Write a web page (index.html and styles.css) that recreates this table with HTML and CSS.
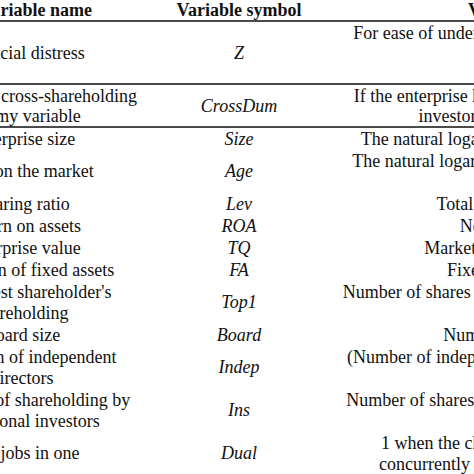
FILE: index.html
```html
<!DOCTYPE html>
<html lang="en">
<head>
<meta charset="utf-8">
<title>Variable definitions</title>
<link rel="stylesheet" href="styles.css">
</head>
<body>
<div class="page">
<table class="vars">
  <colgroup>
    <col class="c-name">
    <col class="c-sym">
    <col class="c-def">
  </colgroup>
  <thead>
    <tr class="head">
      <th class="h-name">Variable name</th>
      <th>Variable symbol</th>
      <th class="h-def">Variable definition</th>
    </tr>
  </thead>
  <tbody>
    <tr class="top rule">
      <td>Financial distress</td>
      <td class="sym">Z</td>
      <td>For ease of understanding, the Z value is multiplied by -1<br>so that a higher value<br>means more distress</td>
    </tr>
    <tr class="top rule">
      <td>Existence of cross-shareholding<br>dummy variable</td>
      <td class="sym">CrossDum</td>
      <td>If the enterprise holds shares of other listed companies or<br>investors, its value is 1 and 0 otherwise</td>
    </tr>
    <tr>
      <td>Enterprise size</td>
      <td class="sym">Size</td>
      <td>The natural logarithm of total assets at the end of year t</td>
    </tr>
    <tr>
      <td>Years on the market</td>
      <td class="sym">Age</td>
      <td>The natural logarithm of the number of years since listing<br>plus one</td>
    </tr>
    <tr>
      <td>Gearing ratio</td>
      <td class="sym">Lev</td>
      <td>Total liabilities / total assets × 100</td>
    </tr>
    <tr>
      <td>Return on assets</td>
      <td class="sym">ROA</td>
      <td>Net profit / total assets ratio</td>
    </tr>
    <tr>
      <td>Enterprise value</td>
      <td class="sym">TQ</td>
      <td>Market value / total assets at year end</td>
    </tr>
    <tr>
      <td>Proportion of fixed assets</td>
      <td class="sym">FA</td>
      <td>Fixed assets / total assets × 100</td>
    </tr>
    <tr>
      <td>The largest shareholder's<br>shareholding</td>
      <td class="sym">Top1</td>
      <td>Number of shares held by the largest shareholder / all shares<br>of the firm</td>
    </tr>
    <tr>
      <td>Board size</td>
      <td class="sym">Board</td>
      <td>Number of board members (no.)</td>
    </tr>
    <tr>
      <td>Proportion of independent<br>directors</td>
      <td class="sym">Indep</td>
      <td>(Number of independent directors / number of directors) %<br>× 100%</td>
    </tr>
    <tr>
      <td>Proportion of shareholding by<br>institutional investors</td>
      <td class="sym">Ins</td>
      <td>Number of shares held by institutional investors / all shares<br>× 100%</td>
    </tr>
    <tr>
      <td>Two jobs in one</td>
      <td class="sym">Dual</td>
      <td>1 when the chairman and the general manager are<br>concurrently held by the same person, otherwise 0</td>
    </tr>
  </tbody>
</table>
</div>
</body>
</html>
```

FILE: styles.css
```css
html, body {
  margin: 0;
  padding: 0;
  background: #ffffff;
}

body {
  width: 474px;
  height: 474px;
  overflow: hidden;
  font-family: "Liberation Serif", "Times New Roman", serif;
  font-size: 18px;
  color: #111111;
}

.page {
  width: 474px;
  height: 474px;
  overflow: hidden;
}

.vars {
  border-collapse: separate;
  border-spacing: 0;
  table-layout: fixed;
  width: 942px;
  margin-left: -128px;
}

.c-name { width: 300px; }
.c-sym { width: 134px; }
.c-def { width: 508px; }

.vars th,
.vars td {
  text-align: center;
  vertical-align: middle;
  white-space: nowrap;
}

.head th {
  font-weight: bold;
  line-height: 20px;
  padding: 0;
  border-bottom: 2px solid #4a4a4a;
}

.head .h-name { padding-left: 28px; }
.head .h-def { padding-right: 40px; }

.vars td {
  padding: 0.5px 0;
  line-height: 21px;
}

.vars .top td {
  line-height: 20px;
}

.vars .rule td {
  border-bottom: 2px solid #4a4a4a;
}

.sym {
  font-style: italic;
}
```
